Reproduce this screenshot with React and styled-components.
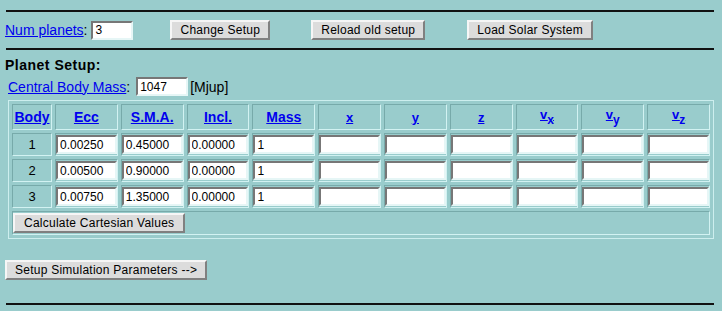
import React from 'react'
import styled, { createGlobalStyle } from 'styled-components'

const GlobalStyle = createGlobalStyle`
  * { box-sizing: border-box; }
  body {
    margin: 0;
    background: #99cccc;
    font-family: "Liberation Sans", Arial, sans-serif;
    font-size: 14px;
    color: #000;
  }
`

const Page = styled.div`
  padding: 10px 8px 0 5px;
  width: 722px;
  height: 311px;
`

const Rule = styled.div`
  margin: ${p => p.top || 0}px 0 0 1px;
  width: 708px;
  height: 2px;
  border-top: 2px solid #111;
  border-left: 1px solid #111;
`

const Bar = styled.div`
  display: flex;
  align-items: center;
  height: ${p => p.h || 20}px;
  margin-top: ${p => p.top || 0}px;
  margin-left: ${p => p.indent || 0}px;
`

const Link = styled.a`
  color: #0000ee;
  text-decoration: underline;
  cursor: pointer;
`

const Field = styled.input`
  width: ${p => p.w || 41}px;
  height: 19px;
  margin: 0 ${p => p.after || 0}px 0 ${p => p.before || 4}px;
  padding: 0 2px;
  border: 2px solid;
  border-color: #777 #e6f6f6 #e6f6f6 #777;
  background: #fff;
  font: 12px "Liberation Sans", Arial, sans-serif;
  color: #000;
  outline: none;
`

const Button = styled.button`
  height: 20px;
  margin-left: ${p => p.gap || 0}px;
  padding: 0 ${p => p.pad || 8}px;
  border: 2px solid;
  border-color: #f6f6f6 #808080 #808080 #f6f6f6;
  background: #dcdcdc;
  font: 12px "Liberation Sans", Arial, sans-serif;
  letter-spacing: 0.25px;
  color: #000;
  white-space: nowrap;
`

const Title = styled.div`
  margin-top: 6px;
  line-height: 18px;
  font-weight: bold;
  letter-spacing: 0.5px;
`

const Table = styled.table`
  margin: 4px 0 0 3px;
  width: 706px;
  table-layout: fixed;
  border-collapse: separate;
  border-spacing: 3px;
  border: 1px solid #cdeeee;
`

const Head = styled.th`
  width: ${p => p.w ? `${p.w}px` : 'auto'};
  height: 26px;
  padding: 0;
  border: 1px solid;
  border-color: #77aaaa #d2f2f2 #d2f2f2 #77aaaa;
  text-align: center;
  font-size: ${p => p.small ? 13 : 14}px;
  font-weight: bold;
`

const Cell = styled.td`
  height: 23px;
  padding: 1px 0;
  border: 1px solid;
  border-color: #77aaaa #d2f2f2 #d2f2f2 #77aaaa;
  text-align: ${p => p.center ? 'center' : 'left'};
  font-size: 13px;
  vertical-align: middle;
`

const CellField = styled(Field)`
  width: 100%;
  margin: 0;
  display: block;
`

const Sub = styled.sub`
  font-size: 12px;
  vertical-align: -5px;
`

const columns = ['Ecc', 'S.M.A.', 'Incl.', 'Mass']
const coords = [
  { key: 'x', label: 'x' },
  { key: 'y', label: 'y' },
  { key: 'z', label: 'z' },
  { key: 'vx', label: 'v', sub: 'x' },
  { key: 'vy', label: 'v', sub: 'y' },
  { key: 'vz', label: 'v', sub: 'z' }
]

const bodies = [
  { id: 1, ecc: '0.00250', sma: '0.45000', incl: '0.00000', mass: '1' },
  { id: 2, ecc: '0.00500', sma: '0.90000', incl: '0.00000', mass: '1' },
  { id: 3, ecc: '0.00750', sma: '1.35000', incl: '0.00000', mass: '1' }
]

export default function App () {
  return (
    <Page>
      <GlobalStyle />
      <Rule />
      <Bar top={8}>
        <Link>Num planets</Link>:
        <Field defaultValue='3' w={42} />
        <Button gap={37}>Change Setup</Button>
        <Button gap={41}>Reload old setup</Button>
        <Button gap={42}>Load Solar System</Button>
      </Bar>
      <Rule top={8} />
      <Title>Planet Setup:</Title>
      <Bar top={3} h={19} indent={3}>
        <Link>Central Body Mass</Link>:
        <Field defaultValue='1047' w={52} before={6} after={2} />
        [Mjup]
      </Bar>
      <Table>
        <thead>
          <tr>
            <Head w={40}><Link>Body</Link></Head>
            {columns.map(c => <Head key={c}><Link>{c}</Link></Head>)}
            {coords.map(c => (
              <Head key={c.key} small>
                <Link>{c.label}{c.sub && <Sub>{c.sub}</Sub>}</Link>
              </Head>
            ))}
          </tr>
        </thead>
        <tbody>
          {bodies.map(b => (
            <tr key={b.id}>
              <Cell center>{b.id}</Cell>
              <Cell><CellField defaultValue={b.ecc} /></Cell>
              <Cell><CellField defaultValue={b.sma} /></Cell>
              <Cell><CellField defaultValue={b.incl} /></Cell>
              <Cell><CellField defaultValue={b.mass} /></Cell>
              {coords.map(c => <Cell key={c.key}><CellField /></Cell>)}
            </tr>
          ))}
          <tr>
            <Cell colSpan={11}><Button pad={9}>Calculate Cartesian Values</Button></Cell>
          </tr>
        </tbody>
      </Table>
      <Bar top={21}>
        <Button>Setup Simulation Parameters --&gt;</Button>
      </Bar>
      <Rule top={23} />
    </Page>
  )
}
